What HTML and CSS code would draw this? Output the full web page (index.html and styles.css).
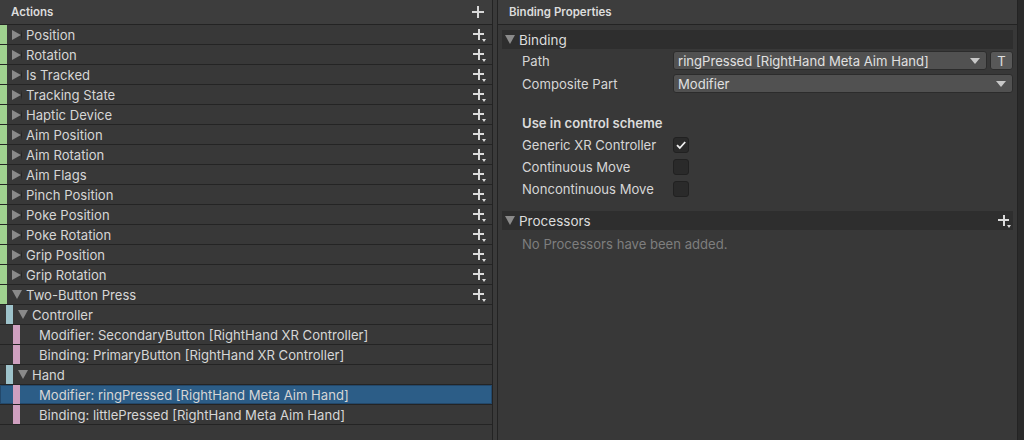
FILE: index.html
```html
<!DOCTYPE html>
<html>
<head>
<meta charset="utf-8">
<link rel="stylesheet" href="styles.css">
</head>
<body>
<div class="app">
  <section class="left">
    <div class="phead">
      <span class="ptitle">Actions</span>
      <svg class="plus" width="12" height="12" viewBox="0 0 12 12"><path d="M5 0h2v5h5v2H7v5H5V7H0V5h5z" fill="#d8d8d8"/></svg>
    </div>
    <div class="rows">
      <div class="row action"><span class="bar green"></span><span class="tri right"></span><span class="lbl">Position</span><span class="add"></span></div>
      <div class="row action"><span class="bar green"></span><span class="tri right"></span><span class="lbl">Rotation</span><span class="add"></span></div>
      <div class="row action"><span class="bar green"></span><span class="tri right"></span><span class="lbl">Is Tracked</span><span class="add"></span></div>
      <div class="row action"><span class="bar green"></span><span class="tri right"></span><span class="lbl">Tracking State</span><span class="add"></span></div>
      <div class="row action"><span class="bar green"></span><span class="tri right"></span><span class="lbl">Haptic Device</span><span class="add"></span></div>
      <div class="row action"><span class="bar green"></span><span class="tri right"></span><span class="lbl">Aim Position</span><span class="add"></span></div>
      <div class="row action"><span class="bar green"></span><span class="tri right"></span><span class="lbl">Aim Rotation</span><span class="add"></span></div>
      <div class="row action"><span class="bar green"></span><span class="tri right"></span><span class="lbl">Aim Flags</span><span class="add"></span></div>
      <div class="row action"><span class="bar green"></span><span class="tri right"></span><span class="lbl">Pinch Position</span><span class="add"></span></div>
      <div class="row action"><span class="bar green"></span><span class="tri right"></span><span class="lbl">Poke Position</span><span class="add"></span></div>
      <div class="row action"><span class="bar green"></span><span class="tri right"></span><span class="lbl">Poke Rotation</span><span class="add"></span></div>
      <div class="row action"><span class="bar green"></span><span class="tri right"></span><span class="lbl">Grip Position</span><span class="add"></span></div>
      <div class="row action"><span class="bar green"></span><span class="tri right"></span><span class="lbl">Grip Rotation</span><span class="add"></span></div>
      <div class="row action"><span class="bar green"></span><span class="tri down"></span><span class="lbl">Two-Button Press</span><span class="add"></span></div>
      <div class="row comp"><span class="bar blue"></span><span class="tri down"></span><span class="lbl">Controller</span></div>
      <div class="row bind"><span class="bar pink"></span><span class="lbl">Modifier: SecondaryButton [RightHand XR Controller]</span></div>
      <div class="row bind"><span class="bar pink"></span><span class="lbl">Binding: PrimaryButton [RightHand XR Controller]</span></div>
      <div class="row comp"><span class="bar blue"></span><span class="tri down"></span><span class="lbl">Hand</span></div>
      <div class="row bind selected"><span class="bar pink"></span><span class="lbl">Modifier: ringPressed [RightHand Meta Aim Hand]</span></div>
      <div class="row bind"><span class="bar pink"></span><span class="lbl">Binding: littlePressed [RightHand Meta Aim Hand]</span></div>
    </div>
  </section>
  <div class="splitter"></div>
  <section class="right">
    <div class="phead">
      <span class="ptitle">Binding Properties</span>
    </div>
    <div class="body">
      <div class="fold"><span class="tri down big"></span><span class="foldlbl">Binding</span></div>
      <div class="field first">
        <span class="flabel">Path</span>
        <div class="dd path"><span>ringPressed [RightHand Meta Aim Hand]</span><span class="caret"></span></div>
        <div class="tbtn">T</div>
      </div>
      <div class="field">
        <span class="flabel">Composite Part</span>
        <div class="dd"><span>Modifier</span><span class="caret"></span></div>
      </div>
      <div class="scheme">Use in control scheme</div>
      <div class="check first">
        <span class="flabel">Generic XR Controller</span>
        <span class="box"><svg width="12" height="12" viewBox="0 0 12 12"><path d="M2 6.2l2.8 2.8L10.2 3" fill="none" stroke="#f0f0f0" stroke-width="1.8"/></svg></span>
      </div>
      <div class="check">
        <span class="flabel">Continuous Move</span>
        <span class="box"></span>
      </div>
      <div class="check">
        <span class="flabel">Noncontinuous Move</span>
        <span class="box"></span>
      </div>
      <div class="fold proc"><span class="tri down big"></span><span class="foldlbl">Processors</span><span class="add"></span></div>
      <div class="empty">No Processors have been added.</div>
    </div>
  </section>
  <div class="edge"></div>
</div>
</body>
</html>
```
FILE: styles.css
```css
* { box-sizing: border-box; }
html, body { margin: 0; padding: 0; }
body {
  width: 1024px;
  height: 440px;
  background: #383838;
  font-family: Inter, "Noto Sans", sans-serif;
  font-size: 13.1px;
  color: #d6d6d6;
  overflow: hidden;
}
.app {
  display: flex;
  height: 440px;
}
.left {
  width: 493px;
  flex: none;
  background: #383838;
  border-right: 1px solid #232323;
}
.splitter {
  width: 4px;
  flex: none;
  background: #3a3a3a;
}
.right {
  width: 521px;
  flex: none;
  background: #383838;
  border-left: 1px solid #232323;
  border-right: 1px solid #232323;
}
.edge {
  flex: 1;
  background: #2a2a2a;
}
.phead {
  height: 25px;
  background: #3d3d3d;
  border-bottom: 1px solid #232323;
  display: flex;
  align-items: center;
  justify-content: space-between;
  padding: 0 8px 0 11px;
}
.ptitle {
  font-size: 11.5px;
  font-weight: 600;
  color: #dcdcdc;
}
.row {
  height: 20px;
  border-bottom: 1px solid #242424;
  display: flex;
  align-items: center;
  position: relative;
  white-space: nowrap;
}
.bar {
  height: 19px;
  width: 7px;
  flex: none;
}
.green { background: #9fd18f; }
.blue { background: #9ec3cb; margin-left: 6px; }
.pink { background: #cf9fbf; margin-left: 13px; }
.tri {
  flex: none;
  width: 0;
  height: 0;
}
.tri.right {
  border-top: 5.5px solid transparent;
  border-bottom: 5.5px solid transparent;
  border-left: 9px solid #8a8a8a;
  margin-left: 5px;
  margin-right: 4px;
}
.tri.down {
  border-left: 5px solid transparent;
  border-right: 5px solid transparent;
  border-top: 9px solid #8a8a8a;
  margin-left: 5px;
  margin-right: 4px;
}
.bind .lbl { margin-left: 19px; }
.add {
  margin-left: auto;
  margin-right: 6px;
  width: 14px;
  height: 14px;
  position: relative;
}
.add::before {
  content: "";
  position: absolute;
  left: 1px; top: 1px;
  width: 11px; height: 11px;
  background:
    linear-gradient(#dcdcdc, #dcdcdc) 4.5px 0 / 2px 11px no-repeat,
    linear-gradient(#dcdcdc, #dcdcdc) 0 4.5px / 11px 2px no-repeat;
}
.add::after {
  content: "";
  position: absolute;
  right: 0; bottom: 0;
  width: 0; height: 0;
  border-left: 2.5px solid transparent;
  border-right: 2.5px solid transparent;
  border-top: 3px solid #dcdcdc;
}
.selected {
  background: #2c5d87;
  box-shadow: inset 0 0 0 1px #23486a;
}
.body {
  padding: 4px 4px 0 4px;
}
.fold {
  height: 19px;
  background: #2e2e2e;
  display: flex;
  align-items: center;
  margin-top: 1px;
}
.tri.big {
  border-left: 5px solid transparent;
  border-right: 5px solid transparent;
  border-top: 9px solid #8a8a8a;
  margin-left: 3px;
  margin-right: 4px;
}
.foldlbl { font-size: 13.5px; color: #dcdcdc; }
.fold .add { margin-right: 2px; }
.field {
  display: flex;
  align-items: center;
  height: 23px;
  padding-left: 20px;
}
.flabel {
  width: 151px;
  flex: none;
}
.dd {
  flex: 1;
  height: 19px;
  background: #515151;
  border: 1px solid #2c2c2c;
  border-radius: 3px;
  display: flex;
  align-items: center;
  justify-content: space-between;
  padding: 0 6px 0 4px;
  color: #e0e0e0;
}
.caret {
  width: 0; height: 0;
  border-left: 5px solid transparent;
  border-right: 5px solid transparent;
  border-top: 6px solid #c8c8c8;
}
.tbtn {
  width: 23px;
  height: 19px;
  margin-left: 3px;
  background: #585858;
  border: 1px solid #2c2c2c;
  border-radius: 3px;
  display: flex;
  align-items: center;
  justify-content: center;
  color: #e0e0e0;
}
.scheme {
  padding-left: 20px;
  margin-top: 18px;
  height: 20px;
  line-height: 20px;
  font-weight: 600;
  color: #dcdcdc;
}
.check {
  display: flex;
  align-items: center;
  height: 22px;
  padding-left: 20px;
}
.check.first { margin-top: 1px; }
.box {
  width: 16px;
  height: 16px;
  background: #2a2a2a;
  border: 1px solid #212121;
  border-radius: 3px;
  display: flex;
  align-items: center;
  justify-content: center;
}
.proc { margin-top: 11px; }
.empty {
  padding-left: 20px;
  height: 28px;
  line-height: 28px;
  color: #7e7e7e;
}
```
